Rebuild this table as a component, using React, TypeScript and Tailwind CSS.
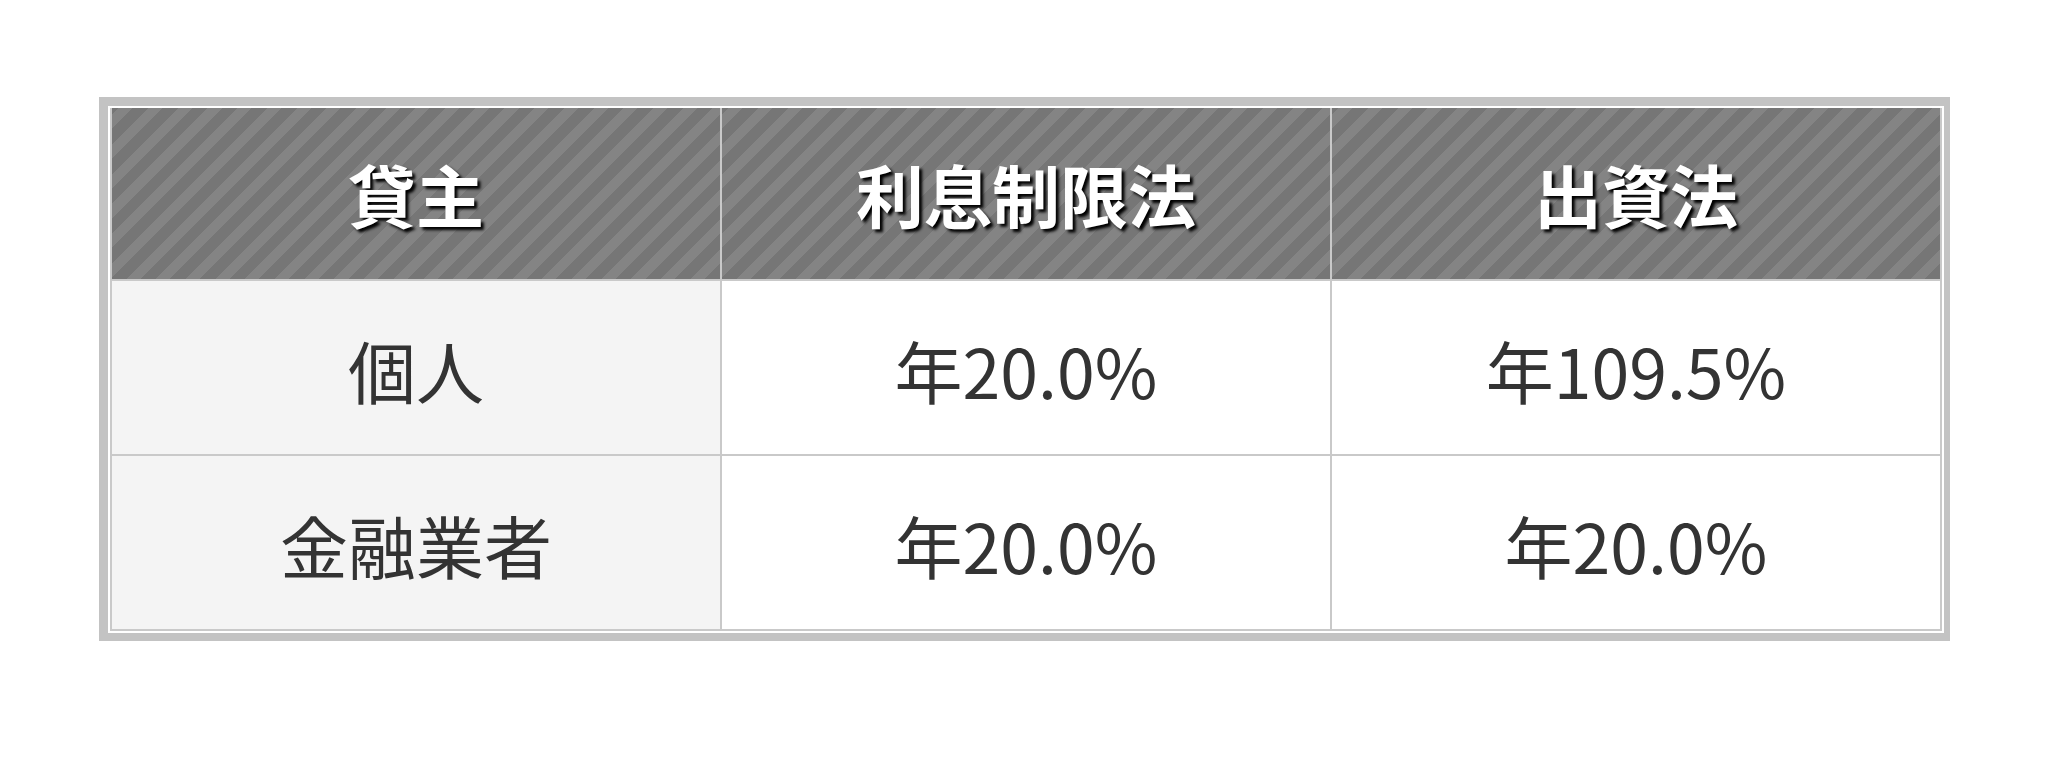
const header = ["貸主", "利息制限法", "出資法"]

const rows = [
  { lender: "個人", interest: "年20.0%", capital: "年109.5%" },
  { lender: "金融業者", interest: "年20.0%", capital: "年20.0%" },
]

const font = { fontFamily: '"Noto Sans CJK JP", "Noto Sans", sans-serif' }

export default function App() {
  return (
    <div className="min-h-[762px] bg-white pt-[97px] pl-[99px]" style={font}>
      <div className="w-[1851px] border-[#c3c3c3] border-l-[9px] border-t-[9px] border-r-[6px] border-b-[8px] bg-white p-[2px]">
        <div className="grid grid-cols-3 gap-[2px] bg-[#c9c9c9] p-[2px] pt-0">
          {header.map((h) => (
            <div
              key={h}
              className="flex h-[171px] items-center justify-center bg-[repeating-linear-gradient(-45deg,#767676_0_11px,#848484_11px_21px)] text-[68px] font-bold leading-none text-white [text-shadow:3px_3px_3px_#000]"
            >
              {h}
            </div>
          ))}
          {rows.map((r) => (
            <div key={r.lender} className="contents">
              <div className="flex h-[173px] items-center justify-center bg-[#f4f4f4] pt-[4px] text-[68px] leading-none text-[#333]">
                {r.lender}
              </div>
              <div className="flex h-[173px] items-center justify-center bg-white pt-[4px] text-[68px] leading-none text-[#333]">
                {r.interest}
              </div>
              <div className="flex h-[173px] items-center justify-center bg-white pt-[4px] text-[68px] leading-none text-[#333]">
                {r.capital}
              </div>
            </div>
          ))}
        </div>
      </div>
    </div>
  )
}
